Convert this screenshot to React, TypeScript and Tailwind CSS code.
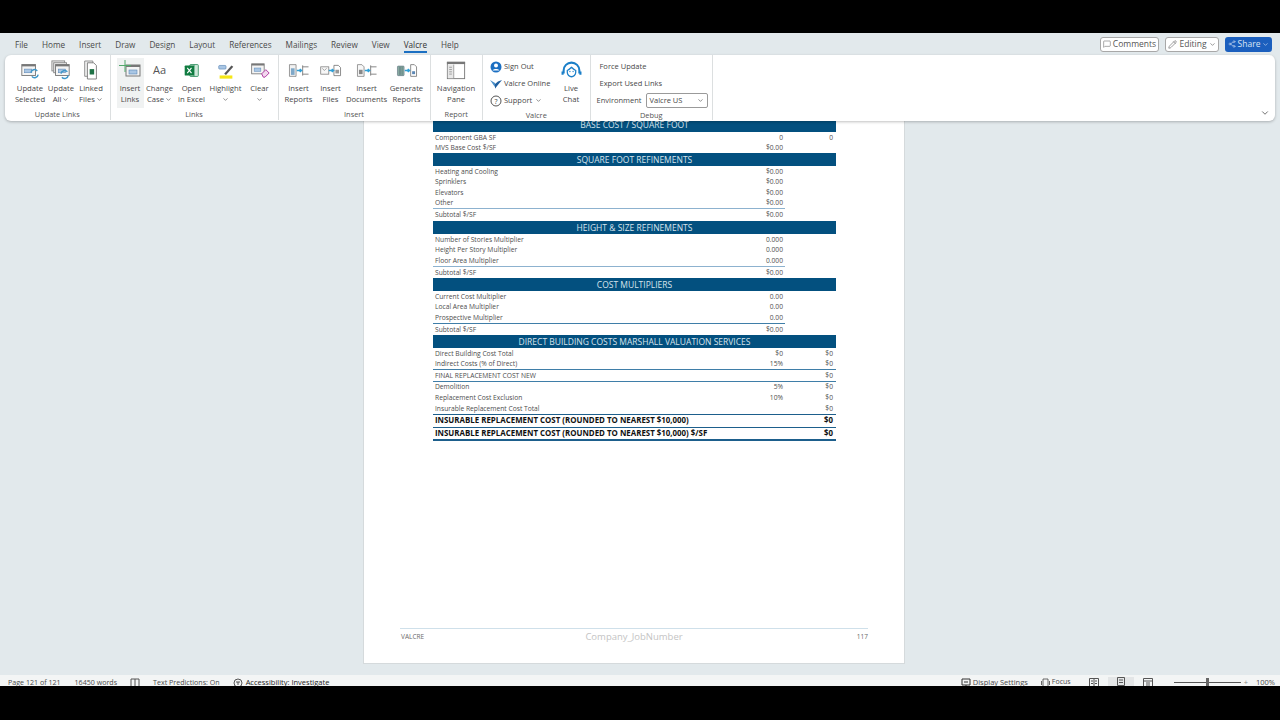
import React from 'react';
import { ChevronDown, MessageSquare, Pencil, Share2 } from 'lucide-react';

const tabs = ['File', 'Home', 'Insert', 'Draw', 'Design', 'Layout', 'References', 'Mailings', 'Review', 'View', 'Valcre', 'Help'];

const WindowIcon = ({ x = 2, y = 5 }: { x?: number; y?: number }) => (
  <g>
    <rect x={x} y={y} width="15" height="12" fill="#f4f4f4" stroke="#777" />
    <rect x={x} y={y} width="15" height="2" fill="#777" />
    <rect x={x + 3} y={y + 5} width="8" height="4" fill="#a9c6e4" stroke="#5b87b5" strokeWidth="0.6" />
  </g>
);

const Refresh = ({ cx = 16, cy = 15 }: { cx?: number; cy?: number }) => (
  <g fill="none" stroke="#3f97c9" strokeWidth="1.6">
    <path d={`M${cx - 4} ${cy - 1}a4 4 0 0 1 7-2`} />
    <path d={`M${cx + 4} ${cy + 1}a4 4 0 0 1-7 2`} />
  </g>
);

const UpdateIcon = () => (
  <svg width="20" height="20" viewBox="0 0 22 22">
    <WindowIcon />
    <Refresh />
  </svg>
);

const UpdateAllIcon = () => (
  <svg width="20" height="20" viewBox="0 0 22 22">
    <rect x="1" y="1" width="14" height="11" fill="#eee" stroke="#888" />
    <rect x="3" y="3" width="14" height="11" fill="#eee" stroke="#888" />
    <WindowIcon x={5} y={5} />
    <Refresh cx={15} cy={16} />
  </svg>
);

const LinkedIcon = () => (
  <svg width="18" height="20" viewBox="0 0 20 22">
    <path d="M3 1h9v17H3z" fill="#f2f2f2" stroke="#888" />
    <path d="M6 3h7l3 3v15H6z" fill="#fff" stroke="#777" />
    <rect x="8.5" y="10" width="5" height="6" fill="#1e7145" />
  </svg>
);

const InsertLinksIcon = () => (
  <svg width="24" height="22" viewBox="0 0 24 22">
    <rect x="8" y="6" width="14" height="11" fill="#f4f4f4" stroke="#777" />
    <rect x="8" y="6" width="14" height="2" fill="#777" />
    <rect x="11" y="11" width="8" height="4" fill="#a9c6e4" stroke="#5b87b5" strokeWidth="0.6" />
    <path d="M7 1v12M1 6.500h12" stroke="#52a86b" strokeWidth="1" />
  </svg>
);

const ExcelIcon = () => (
  <svg width="17" height="17" viewBox="0 0 20 20">
    <rect x="8" y="3" width="10" height="14" rx="1" fill="#cfe8da" stroke="#2f8f5f" />
    <path d="M13 3v14" stroke="#2f8f5f" />
    <rect x="2" y="4" width="11" height="12" rx="1" fill="#107c41" />
    <path d="M5 7l5 6M10 7l-5 6" stroke="#fff" strokeWidth="1.300" />
  </svg>
);

const HighlightIcon = () => (
  <svg width="20" height="20" viewBox="0 0 22 22">
    <rect x="3" y="6" width="8" height="4" rx="1" fill="#a9c6e4" stroke="#5b87b5" strokeWidth="0.7" />
    <path d="M9 15l8-9 2 1.500-8 9z" fill="#555" />
    <rect x="4" y="17" width="14" height="3.500" fill="#f5e616" />
  </svg>
);

const ClearIcon = () => (
  <svg width="20" height="19" viewBox="0 0 24 22">
    <WindowIcon x={2} y={3} />
    <path d="M14 15l5-5 4 4-5 5h-2z" fill="#f2d7ee" stroke="#b13fa4" strokeWidth="1.200" />
  </svg>
);

const ArrowSplit = ({ children }: { children: React.ReactNode }) => (
  <svg width="22" height="15" viewBox="0 0 30 20">
    {children}
    <path d="M12 10h6M16 8l2.500 2-2.500 2" stroke="#2f9fd6" strokeWidth="2" fill="none" />
  </svg>
);

const Lines = () => (
  <path d="M20 3v14M20 5h8M20 15h8" stroke="#777" strokeWidth="1.200" fill="none" />
);

const ReportsIcon = () => (
  <ArrowSplit>
    <path d="M2 2h9v16H2z" fill="#f2f2f2" stroke="#777" />
    <path d="M4 7h5v9H4z" fill="#7fa8c8" />
    <Lines />
  </ArrowSplit>
);

const FilesIcon = () => (
  <ArrowSplit>
    <rect x="1" y="5" width="11" height="10" fill="#f7f7f7" stroke="#777" />
    <path d="M3 7l3 3 3-3" stroke="#888" fill="none" />
    <path d="M19 3h6l3 3v11h-9z" fill="#fff" stroke="#666" />
    <rect x="21" y="9" width="5" height="5" fill="#999" />
  </ArrowSplit>
);

const DocsIcon = () => (
  <ArrowSplit>
    <path d="M2 2h6l3 3v13H2z" fill="#f7f7f7" stroke="#777" />
    <rect x="4" y="9" width="5" height="6" fill="#888" />
    <Lines />
  </ArrowSplit>
);

const GenerateIcon = () => (
  <ArrowSplit>
    <rect x="2" y="4" width="9" height="13" rx="1" fill="#8fb5a8" stroke="#567" strokeWidth="0.8" />
    <path d="M4.500 5v11M6.500 5v11M8.500 5v11" stroke="#456" strokeWidth="0.7" />
    <path d="M20 2h5l3 3v13h-8z" fill="#fff" stroke="#666" />
    <rect x="22" y="11" width="4" height="4" fill="#5b87b5" />
  </ArrowSplit>
);

const NavIcon = () => (
  <svg width="20" height="20" viewBox="0 0 22 22">
    <rect x="1.500" y="2.500" width="19" height="18" fill="#fff" stroke="#777" />
    <rect x="1" y="2" width="20" height="2.500" fill="#777" />
    <rect x="2" y="5" width="6" height="15" fill="#e8e8e8" />
    <path d="M8.500 5v15M3.500 8h3M3.500 10.500h3M3.500 13h3M3.500 15.500h3" stroke="#999" />
  </svg>
);

const UserIcon = () => (
  <svg width="12" height="12" viewBox="0 0 12 12">
    <circle cx="6" cy="6" r="5.500" fill="#1b6fc2" />
    <circle cx="6" cy="4.500" r="2" fill="#fff" />
    <path d="M2.500 9.500c1-2 6-2 7 0" fill="#fff" />
  </svg>
);

const ValcreIcon = () => (
  <svg width="12" height="10" viewBox="0 0 12 10">
    <path d="M0 1l6 8.500L5 4z" fill="#4a8fc9" />
    <path d="M5 9.500L12 1 8 2.500 5 5z" fill="#1f5f9f" />
  </svg>
);

const HelpIcon = () => (
  <svg width="12" height="12" viewBox="0 0 12 12">
    <circle cx="6" cy="6" r="5" fill="none" stroke="#555" />
    <text x="6" y="8.500" textAnchor="middle" fontSize="7" fill="#444" fontFamily="Open Sans, sans-serif">?</text>
  </svg>
);

const ChatIcon = () => (
  <svg className="mt-[3px]" width="21" height="21" viewBox="0 0 20 20" fill="none">
    <path d="M2.500 12V9a7.500 7.500 0 0 1 15 0v3" stroke="#1b7fc8" strokeWidth="2" />
    <path d="M6 9c2-1 3-2 4-3 1 1 2 2 4 3v2c0 2-2 4-4 4s-4-2-4-4z" stroke="#1b7fc8" strokeWidth="1.200" />
    <circle cx="8.500" cy="10" r="0.600" fill="#1b7fc8" />
    <circle cx="11.500" cy="10" r="0.600" fill="#1b7fc8" />
    <path d="M1.500 10v3M18.500 10v3" stroke="#1b7fc8" strokeWidth="2" />
  </svg>
);

const Caret = () => <ChevronDown className="inline-block w-[7px] h-[7px] ml-[1px]" strokeWidth={2} />;

type BigProps = {
  icon: React.ReactNode;
  one: string;
  two?: React.ReactNode;
  width: string;
  active?: boolean;
};

const BigButton = ({ icon, one, two, width, active }: BigProps) => (
  <div className={`${width} h-[50px] flex flex-col items-center shrink-0 ${active ? 'bg-[#f0f2f2]' : ''}`}>
    <div className="h-[24px] flex items-center justify-center">{icon}</div>
    <div className="mt-[1px] text-[7.700px] leading-[10.500px] text-center whitespace-nowrap text-[#484848]">
      <div>{one}</div>
      <div className="min-h-[10px]">{two}</div>
    </div>
  </div>
);

const Group = ({ label, className, pad, children }: { label: string; className: string; pad?: string; children: React.ReactNode }) => (
  <div className={`${className} h-full flex flex-col border-r border-[#dcdfe0] shrink-0`}>
    <div className={`flex flex-1 pt-[3px] ${pad ?? ''}`}>{children}</div>
    <div className="h-[13px] mb-[1px] text-[7.400px] leading-[12px] text-center text-[#555]">{label}</div>
  </div>
);

const Ribbon = () => (
  <div className="relative z-10 mx-[5px] h-[66px] flex bg-white rounded-[6px] shadow-[0_1px_3px_rgba(0,0,0,0.25)] pb-[1px]">
    <Group label="Update Links" className="w-[105.500px]" pad="pl-[9px]">
      <BigButton width="w-[32px]" icon={<UpdateIcon />} one="Update" two="Selected" />
      <BigButton width="w-[30px]" icon={<UpdateAllIcon />} one="Update" two={<>All<Caret /></>} />
      <BigButton width="w-[30px]" icon={<LinkedIcon />} one="Linked" two={<>Files<Caret /></>} />
    </Group>
    <Group label="Links" className="w-[168px]" pad="pl-[6px]">
      <BigButton active width="w-[27px]" icon={<InsertLinksIcon />} one="Insert" two="Links" />
      <BigButton width="w-[32px]" icon={<span className="text-[11px] text-[#555]">Aa</span>} one="Change" two={<>Case<Caret /></>} />
      <BigButton width="w-[32px]" icon={<ExcelIcon />} one="Open" two="in Excel" />
      <BigButton width="w-[36px]" icon={<HighlightIcon />} one="Highlight" two={<Caret />} />
      <BigButton width="w-[32px]" icon={<ClearIcon />} one="Clear" two={<Caret />} />
    </Group>
    <Group label="Insert" className="w-[152px]" pad="pl-[3px]">
      <BigButton width="w-[34px]" icon={<ReportsIcon />} one="Insert" two="Reports" />
      <BigButton width="w-[30px]" icon={<FilesIcon />} one="Insert" two="Files" />
      <BigButton width="w-[42px]" icon={<DocsIcon />} one="Insert" two="Documents" />
      <BigButton width="w-[38px]" icon={<GenerateIcon />} one="Generate" two="Reports" />
    </Group>
    <Group label="Report" className="w-[52.500px]" pad="pl-[3px]">
      <BigButton width="w-[45px]" icon={<NavIcon />} one="Navigation" two="Pane" />
    </Group>
    <Group label="Valcre" className="w-[107.500px]">
      <div className="w-[78px] pl-[7px] text-[7.500px] text-[#484848]">
        <div className="h-[17px] flex items-center gap-[2px]"><UserIcon /><span>Sign Out</span></div>
        <div className="h-[17px] flex items-center gap-[2px]"><ValcreIcon /><span>Valcre Online</span></div>
        <div className="h-[17px] flex items-center gap-[2px]"><HelpIcon /><span>Support</span><Caret /></div>
      </div>
      <BigButton width="w-[20px]" icon={<ChatIcon />} one="Live" two="Chat" />
    </Group>
    <Group label="Debug" className="w-[122.500px]" pad="pl-[9px]">
      <div className="text-[7.500px] text-[#484848]">
        <div className="h-[17px] flex items-center">Force Update</div>
        <div className="h-[17px] flex items-center">Export Used Links</div>
        <div className="h-[17px] flex items-center -ml-[3px] gap-[4px]">
          <span>Environment</span>
          <div className="w-[62px] h-[15px] flex items-center justify-between px-[3px] border border-[#9a9a9a] rounded-[2px]">
            <span>Valcre US</span>
            <ChevronDown className="w-[7px] h-[7px]" strokeWidth={2} />
          </div>
        </div>
      </div>
    </Group>
    <div className="flex-1 flex items-end justify-end pr-[5px] pb-[2px]">
      <ChevronDown className="w-[10px] h-[10px] text-[#555]" strokeWidth={2} />
    </div>
  </div>
);

const TopBar = () => (
  <div className="h-[22px] flex justify-between items-center pl-[15px] pr-[8px]">
    <div className="flex gap-[14px] mt-[4px] text-[8.200px] text-[#4a4a4a]">
      {tabs.map((t) => (
        <div key={t} className={`relative ${t === 'Valcre' ? 'border-b-2 border-[#1b6fc2] text-[#333]' : 'border-b-2 border-transparent'}`}>
          {t}
        </div>
      ))}
    </div>
    <div className="flex gap-[6px] text-[8.500px] text-[#555]">
      <div className="w-[59px] h-[15px] flex items-center justify-center gap-[2px] bg-white border border-[#a8a8a8] rounded-[3px]">
        <MessageSquare className="w-[8px] h-[8px]" strokeWidth={1.5} />
        Comments
      </div>
      <div className="w-[54px] h-[15px] flex items-center justify-center gap-[2px] bg-white border border-[#a8a8a8] rounded-[3px]">
        <Pencil className="w-[9px] h-[9px]" strokeWidth={1.5} />
        Editing
        <ChevronDown className="w-[7px] h-[7px]" strokeWidth={2} />
      </div>
      <div className="w-[47px] h-[15px] flex items-center justify-center gap-[2px] bg-[#1b5fbe] text-[#d8e4f5] rounded-[3px]">
        <Share2 className="w-[8px] h-[8px]" strokeWidth={1.5} />
        Share
        <ChevronDown className="w-[7px] h-[7px]" strokeWidth={2} />
      </div>
    </div>
  </div>
);

type RowProps = {
  label: string;
  a?: string;
  b?: string;
  h: string;
  bold?: boolean;
};

const Row = ({ label, a, b, h, bold }: RowProps) => (
  <div className={`${h} w-full flex items-center pt-[1px] ${bold ? 'font-bold text-[#111] text-[7.900px]' : 'text-[#4d4d4d] text-[6.700px]'}`}>
    <div className="flex-1 pl-[2px] whitespace-nowrap">{label}</div>
    <div className="w-[60px] text-right pr-[2px]">{a}</div>
    <div className="w-[51px] text-right pr-[3px]">{b}</div>
  </div>
);

const Head = ({ children, h = 'h-[13px] pt-[1px]' }: { children: React.ReactNode; h?: string }) => (
  <div className={`${h} bg-[#03507f] text-[#d7e3ec] text-[8.500px] flex items-center justify-center`}>{children}</div>
);

// short rules stop under the first number column
const Rule = ({ color = 'bg-[#8db2cf]', short = true }: { color?: string; short?: boolean }) => (
  <div className={`h-[1px] ${short ? 'w-[352px]' : 'w-full'} ${color}`} />
);

const CostTable = () => (
  <div className="w-[403px] flex flex-col">
    <Head h="h-[11px] pb-[2px]">BASE COST / SQUARE FOOT</Head>
    <Row h="h-[10.500px]" label="Component GBA SF" a="0" b="0" />
    <Row h="h-[10.500px]" label="MVS Base Cost $/SF" a="$0.00" />
    <Head>SQUARE FOOT REFINEMENTS</Head>
    <Row h="h-[10.500px]" label="Heating and Cooling" a="$0.00" />
    <Row h="h-[10.500px]" label="Sprinklers" a="$0.00" />
    <Row h="h-[10.500px]" label="Elevators" a="$0.00" />
    <Row h="h-[10.500px]" label="Other" a="$0.00" />
    <Rule />
    <Row h="h-[12px]" label="Subtotal $/SF" a="$0.00" />
    <Head>HEIGHT &amp; SIZE REFINEMENTS</Head>
    <Row h="h-[10.500px]" label="Number of Stories Multiplier" a="0.000" />
    <Row h="h-[10.500px]" label="Height Per Story Multiplier" a="0.000" />
    <Row h="h-[10.500px]" label="Floor Area Multiplier" a="0.000" />
    <Rule />
    <Row h="h-[11.500px]" label="Subtotal $/SF" a="$0.00" />
    <Head>COST MULTIPLIERS</Head>
    <Row h="h-[10.500px]" label="Current Cost Multiplier" a="0.00" />
    <Row h="h-[10.500px]" label="Local Area Multiplier" a="0.00" />
    <Row h="h-[10.500px]" label="Prospective Multiplier" a="0.00" />
    <Rule color="bg-[#3f7ea8]" />
    <Row h="h-[11.500px]" label="Subtotal $/SF" a="$0.00" />
    <Head>DIRECT BUILDING COSTS MARSHALL VALUATION SERVICES</Head>
    <Row h="h-[10.500px]" label="Direct Building Cost Total" a="$0" b="$0" />
    <Row h="h-[10.500px]" label="Indirect Costs (% of Direct)" a="15%" b="$0" />
    <Rule color="bg-[#3f7ea8]" short={false} />
    <Row h="h-[10.500px]" label="FINAL REPLACEMENT COST NEW" b="$0" />
    <Rule color="bg-[#3f7ea8]" short={false} />
    <Row h="h-[10.500px]" label="Demolition" a="5%" b="$0" />
    <Row h="h-[10.500px]" label="Replacement Cost Exclusion" a="10%" b="$0" />
    <Row h="h-[11.500px]" label="Insurable Replacement Cost Total" b="$0" />
    <Rule color="bg-[#1d5f8c]" short={false} />
    <Row bold h="h-[11.500px]" label="INSURABLE REPLACEMENT COST (ROUNDED TO NEAREST $10,000)" b="$0" />
    <Rule color="bg-[#1d5f8c]" short={false} />
    <Row bold h="h-[11px]" label="INSURABLE REPLACEMENT COST (ROUNDED TO NEAREST $10,000) $/SF" b="$0" />
    <div className="h-[2px] bg-[#1d5f8c]" />
  </div>
);

const Page = () => (
  <div className="ml-[363px] w-[542px] h-[543px] flex flex-col bg-white border border-[#d5dadc] border-t-0 px-[69px]">
    <CostTable />
    <div className="mt-auto -mx-[33px] mb-[19px] border-t border-[#cfe0ea] pt-[1px] flex items-center justify-between text-[6.500px] text-[#6b6b6b]">
      <span className="w-[60px] pl-[1px]">VALCRE</span>
      <span className="text-[9.500px] text-[#c4c4c4]">Company_JobNumber</span>
      <span className="w-[60px] text-right">117</span>
    </div>
  </div>
);

const StatusBar = () => (
  <div className="h-[11px] overflow-hidden flex items-center justify-between bg-[#f3f5f5] pl-[8px] pr-[5px] pt-[4px] text-[7.100px] text-[#4a4a4a] whitespace-nowrap">
    <div className="flex items-center">
      <span>Page 121 of 121</span>
      <span className="ml-[14px]">16450 words</span>
      <svg className="ml-[13px]" width="10" height="10" viewBox="0 0 10 10" fill="none" stroke="#555">
        <path d="M1 1h8v8H1zM5 1v8" />
      </svg>
      <span className="ml-[13px]">Text Predictions: On</span>
      <svg className="ml-[13px]" width="10" height="10" viewBox="0 0 10 10" fill="none" stroke="#555">
        <circle cx="5" cy="5" r="4" />
        <path d="M3 4h4M5 4v3" />
      </svg>
      <span className="ml-[3px] text-[7.500px] text-[#222]">Accessibility: Investigate</span>
    </div>
    <div className="flex items-center text-[7.500px]">
      <svg width="10" height="10" viewBox="0 0 10 10" fill="none" stroke="#333">
        <path d="M1 1h8v6H1zM5 7v3M3 4h4" />
      </svg>
      <span className="ml-[2px]">Display Settings</span>
      <svg className="ml-[13px]" width="9" height="10" viewBox="0 0 9 10" fill="none" stroke="#444">
        <path d="M2 1h5v8H2zM0.500 3v4M8.500 3v4" strokeWidth="0.8" />
      </svg>
      <span className="ml-[2px] text-[7px]">Focus</span>
      <svg className="ml-[18px]" width="10" height="9" viewBox="0 0 10 9" fill="none" stroke="#555">
        <path d="M0.500 0.500h9v8h-9zM5 0.500v8M2 3h2M6 3h2M2 5.500h2M6 5.500h2" />
      </svg>
      <div className="ml-[9px] w-[26px] h-[11px] flex justify-center bg-[#e4e6e7]">
        <svg width="8" height="9" viewBox="0 0 8 9" fill="none" stroke="#555">
          <path d="M0.500 0.500h7v8h-7zM2 3h4M2 5.500h4" />
        </svg>
      </div>
      <svg className="ml-[9px]" width="10" height="9" viewBox="0 0 10 9" fill="none" stroke="#555">
        <path d="M0.500 0.500h9v8h-9zM0.500 3h9M3 5h4M3 7h4" />
      </svg>
      <div className="ml-[21px] w-[67px] h-[9px] flex items-center justify-center relative">
        <div className="w-full h-[1px] bg-[#555]" />
        <div className="absolute w-[3px] h-[9px] bg-[#666]" />
      </div>
      <span className="ml-[3px] text-[#888]">+</span>
      <span className="ml-[8px]">100%</span>
    </div>
  </div>
);

const App = () => {
  return (
    <div className="w-[1280px] h-[720px] flex flex-col bg-black overflow-hidden font-['Open_Sans',sans-serif]">
      <div className="h-[33px] shrink-0" />
      <div className="h-[642px] flex flex-col bg-[#e2e9ec] overflow-hidden">
        <TopBar />
        <Ribbon />
        <Page />
      </div>
      <StatusBar />
    </div>
  );
};

export default App;
